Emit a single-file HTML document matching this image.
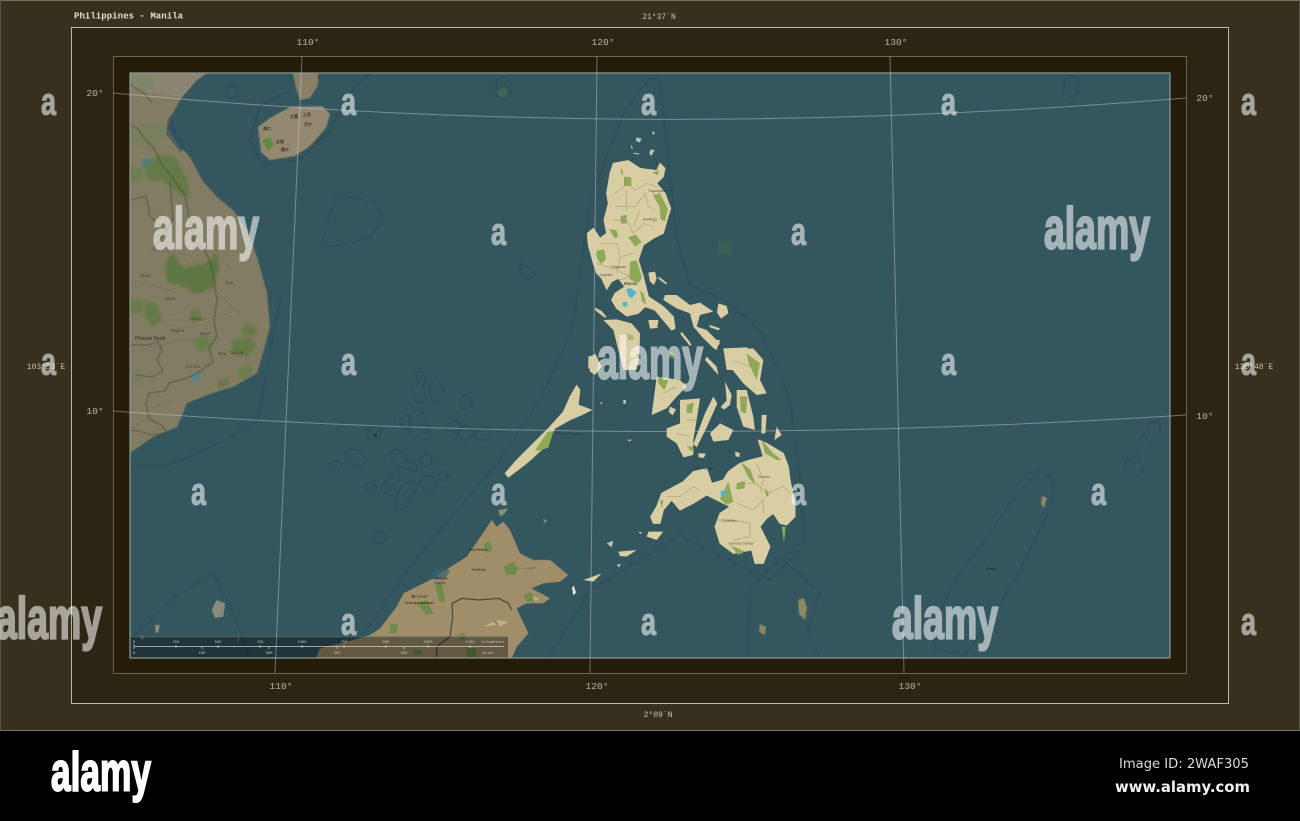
<!DOCTYPE html>
<html><head><meta charset="utf-8"><title>Philippines - Manila</title>
<style>html,body{margin:0;padding:0;background:#000}svg{display:block}</style></head>
<body>
<svg xmlns="http://www.w3.org/2000/svg" width="1300" height="821" viewBox="0 0 1300 821">
<defs>
<clipPath id="m"><rect x="130" y="73" width="1040" height="585"/></clipPath>
<filter id="b" x="-5%" y="-5%" width="110%" height="110%"><feGaussianBlur stdDeviation="0.55"/></filter>
<filter id="b2" x="-5%" y="-5%" width="110%" height="110%"><feGaussianBlur stdDeviation="1.3"/></filter>
</defs>
<rect width="1300" height="821" fill="#000"/>
<rect x="0" y="0" width="1300" height="731" fill="#38301e"/>
<path d="M0 .5H1300M0 730.5H1300" stroke="#7b715a" stroke-width="1"/>
<path d="M.5 0V730M1299.5 0V730" stroke="#5a5340" stroke-width="1"/>
<rect x="71.5" y="27.5" width="1157" height="676" fill="#2d2513" stroke="#bdb8a0"/>
<rect x="113.5" y="56.5" width="1073" height="617" fill="#241b09" stroke="#6e6449"/>
<rect x="130" y="73" width="1040" height="585" fill="#34565f"/>

<g clip-path="url(#m)">
<!-- EEZ lines -->
<g fill="none" stroke="#2a4953" stroke-width=".9" filter="url(#b)" opacity=".85">
<path d="M650 78L660 80 668 155 676 235 690 285 725 300 760 330 790 400 800 480 805 545 770 580 730 560 680 535 640 560 590 590 560 640 548 658"/>
<path d="M650 78L625 110 590 200 582 260 572 330 540 400 500 460 440 530 400 580 360 640"/>
<path d="M130 465L170 465 225 440 258 420 265 380 280 300"/>
<path d="M370 73L345 98 330 130 300 160 262 165 250 140 260 105 292 90"/>
<path d="M130 640L175 597 213 574 228 600 250 658"/>
<path d="M780 558L820 592 808 630 820 658M780 558L750 590 748 658"/>
<path d="M1040 471L1054 480 1050 510 1020 570 990 620 965 655 935 650 932 630 955 580 985 540 1020 490z"/>
<path d="M1125 460L1138 455 1143 470 1135 478 1124 472z"/>
<path d="M1150 422L1160 422 1160 435 1150 441 1143 435z"/>
<path d="M497 88a7 7 0 1 0 12 0a7 7 0 1 0-12 0zM1065 86a7 7 0 1 0 12 1a7 7 0 1 0-12-1zM226 92a6 6 0 1 0 12 0a6 6 0 1 0-12 0z"/>
<path d="M337 194L375 203 383 218 370 238 330 247 322 240z"/>
<path d="M521 263l8 5 6 7-6 5-9-7z"/>
<!-- Spratly loops -->
<path d="M416 374a5 6 0 1 1 9 8l-3 6a6 8 0 1 1-8 6 7 6 0 0 1 5-10z"/>
<path d="M430 388a6 7 0 0 1 12-2c4 4 0 12-4 16-5 4-9-8-8-14z"/>
<path d="M410 415a8 7 0 0 1 15 0c2 10 4 14 0 18-6 5-14 3-16-2z"/>
<path d="M400 420a6 6 0 1 1 10 6 6 6 0 0 1-10-6z"/>
<path d="M460 402a6 7 0 1 1 12 0 6 7 0 1 1-12 0z"/>
<path d="M448 427a7 6 0 1 1 13 3 7 6 0 0 1-13-3zM458 433a7 7 0 1 1 14 0 7 7 0 0 1-14 0zM474 433a9 6 0 1 1 18 0 9 7 0 0 1-18 0z"/>
<path d="M367 433a7 7 0 1 1 14 0 7 7 0 0 1-14 0z"/>
<path d="M345 457a8 6 0 0 1 18-2c4 3 4 9-2 10-7 2-8 2-16-8zM330 464a6 5 0 1 1 10 5 6 5 0 0 1-10-5z"/>
<path d="M390 455a6 6 0 0 1 12 0l14 10c2 6-2 8-6 6l-17-8zM420 460a6 6 0 1 1 12 0 6 6 0 0 1-12 0z"/>
<path d="M380 490c4-8 10-14 14-18 8-2 6 6 2 10l-8 12zM366 487a5 5 0 1 1 10 0 5 5 0 0 1-10 0z"/>
<path d="M400 490c4-8 10-10 14-8 6 4 2 12-4 14-3 12-10 18-14 12-2-6 0-12 4-18zM420 483a8 7 0 1 1 16 0 8 7 0 0 1-16 0zM438 476a5 4 0 1 1 10 0 5 4 0 0 1-10 0z"/>
<path d="M373 537a6 6 0 1 1 13 0 6 6 0 0 1-13 0z"/>
</g>
<path d="M718 240h14v14h-14z" fill="#3b5f54" filter="url(#b)"/>

<!-- Indochina -->
<path d="M130 73H207L197 80 182 97 173 113 168 128 177 143 190 157 202 180 217 197 233 210 248 230 258 260 267 293 270 327 263 353 257 373 233 387 213 393 187 403 183 413 177 427 153 437 130 453z" fill="#827b63" filter="url(#b)"/>
<path d="M130 73H207L197 80 182 97 130 90z" fill="#8a8570"/>
<path d="M172 113l2 15 12 20-6 4-14-18 2-15z" fill="#2f4f5a" opacity=".6"/>
<g filter="url(#b2)" opacity=".78">
<path d="M130 76l20-2 6 10-14 8-12-2z" fill="#7f8568"/>
<path d="M131 125l30 0 6 10-18 14-18-6z" fill="#72815c" opacity=".75"/>
<path d="M143 165l15-10 18 2 10 20 5 22-10-4-18-14-14-1z" fill="#5e7a3f"/>
<path d="M130 165l12 2 3 12-15 4z" fill="#6c7e52"/>
<path d="M165 262l8-8 10 14 24-5 10-10 2 15-6 20-18 6-12-8-16-4z" fill="#557437"/>
<path d="M145 300l12 4 5 18-10 5-8-13z" fill="#5d7a3e"/>
<path d="M130 300h12v14h-12z" fill="#647a4a"/>
<path d="M190 310l8 0 3 8-8 6zM258 328l-4 8-14-2 6-10z" fill="#5f7a3c"/>
<path d="M232 340l18-3 6 8-8 12-16-3z" fill="#5e7a3e"/>
<path d="M193 340l12-4 8 10-14 6z" fill="#5f7f3f"/>
<path d="M238 368l12-4 3 8-12 8z" fill="#667f42"/>
<path d="M218 380l12-3-3 9-9 3z" fill="#63793f"/>
<path d="M130 370h14v16h-14z" fill="#7a7d5e"/>
</g>
<rect x="191" y="373" width="9" height="8" fill="#4a8a9c" opacity=".7"/>
<rect x="142" y="158" width="10" height="8" fill="#41808c" opacity=".6"/>
<g fill="none" stroke="#3f4236" stroke-width=".8" opacity=".8" filter="url(#b)">
<path d="M130 125l8 4 5 8 10 10 8 16 14 18 10 15 5 25 4 20 10 8 5 10 5 20 3 22-3 20 3 15-8 12 4 14-14 10-12 6-18 5-4 8-16 2-3 10 3 16 12 6 6 8-16 2-12-4-18 0"/>
<path d="M130 345l20 0 8-4 4 10-5 8 6 12-10 6-18-2"/>
<path d="M130 85l14 8 8 10M130 200l16-4 4 20 12 12M170 180l3 40 -20 30"/>
</g>
<g fill="none" stroke="#6e6a55" stroke-width=".6" opacity=".8">
<path d="M140 200l30 20 40 20 20 30M150 250l40 5 30 40 20 20M130 280l40 10 40-10M170 320l30 0 40-10M140 350l40-10 40 0M150 410l20-10M130 430l30-20M190 230l30 30"/>
</g>
<g font-family="Liberation Sans,sans-serif" font-size="4.5" fill="#2c2c24" opacity=".7">
<text x="135" y="340" font-weight="bold" font-size="5">Phnom Penh</text><text x="170" y="332">Angkor</text><text x="190" y="320">Stung</text><text x="200" y="335">Buon</text><text x="218" y="355">Nha</text><text x="186" y="368">Ho Chi</text><text x="225" y="284">Quy</text><text x="165" y="300">Ubon</text><text x="140" y="277">Khon</text><text x="230" y="354">Da Lat</text>
</g>

<!-- Hainan + Leizhou -->
<path d="M293 73H318L318 85 310 98 300 100 296 88z" fill="#8a8068" filter="url(#b)"/>
<path d="M258 127L270 118 290 107 322 106 330 114 326 128 310 146 295 156 270 160 261 152z" fill="#958870" filter="url(#b)"/>
<path d="M262 140l8-3 4 8-6 6z" fill="#5f8a3f" filter="url(#b)"/>
<g font-family="Liberation Sans,sans-serif" font-size="4" font-weight="bold" fill="#222" opacity=".8">
<text x="263" y="130">海口</text><text x="290" y="118">文昌</text><text x="303" y="116">三亚</text><text x="276" y="143">五指</text><text x="304" y="126">万宁</text><text x="281" y="151">陵水</text>
</g>

<!-- Philippines north: coordinates from crop -->
<g transform="translate(500 130) scale(.33333)" filter="url(#b)">
<path fill="#d9cda4" stroke="#d9cda4" stroke-width="3" stroke-linejoin="round" d="M340 100L385 92 420 115 470 122 480 100 495 115 490 140 470 160 495 190 512 235 500 275 490 310 460 325 430 345 415 390 430 440 445 500 490 530 520 560 525 595 515 600 490 570 465 540 435 530 415 550 380 558 350 535 335 510 345 490 375 470 355 445 335 455 320 478 305 445 290 430 280 400 265 345 262 310 280 295 300 325 320 310 312 270 325 220 320 190 330 130z"/>
<path fill="#d9cda4" d="M310 570L350 568 395 580 420 610 418 680 410 720 370 720 350 640 340 600z"/>
<path fill="#d9cda4" d="M445 428L465 425 470 445 462 465 450 455zM475 440l12 8 15 12-4 3-22-16zM445 570l30 0-3 24-22 2zM655 520l25 8 5 22-22 16-12-18zM285 533l20 10 15 18-6 2-28-22z"/>
<path fill="#d9cda4" d="M495 495L530 495 570 525 600 518 640 545 600 555 590 590 620 600 660 640 645 658 610 625 580 590 570 550 530 535 490 510z"/>
<path fill="#d9cda4" d="M670 655L740 652 770 680 785 720H680zM265 680l20-5 10 40h-30zM545 605l20 25 10 15-6 2-28-35zM630 585l30 10-4 6-28-10z"/>
<path fill="#e8e6d8" opacity=".75" d="M410 22l15 4-6 12-12-6zM393 42l6 14-5 0zM400 68l18 2-2 4-16-3zM452 58l12 2-10 18-6-8zM458 4l6 2-2 8-5-2z"/>
<g fill="#8fa859">
<path d="M372 140l22 2 0 26-22 0zM362 108l8 24-6 2zM458 195l22-5 14 28 10 20-10 36-12-6-4-40z"/>
<path d="M362 258l18-4 0 26-18 0zM328 298l22 2 4 20-10 6zM385 322l22-8 18 22-20 14zM290 362l22-4 6 30-16 14-12-20z"/>
<path d="M390 395l20-4 16 52-10 16-28-12zM420 480l12 14 6 30-12-10zM458 128l20-8-6 16zM275 685l16 0 10 30h-20z"/>
<path d="M380 610l22 8 0 60-10 0z" opacity=".6"/>
</g>
<path d="M378 478l14-4 18 14-14 16-10-4-4-12z" fill="#4fb5cd"/>
<path d="M368 515h14v14h-14z" fill="#5ab5ba"/>
<g fill="none" stroke="#a8986c" stroke-width="2" opacity=".85">
<path d="M345 190l40-30 20 20 35-20 30 10M345 230l60 0 30-40 10 40 20 10M340 270l40 0 20 40 30-30 30 10M300 340l50 0 10 40 40-10M290 400l60 20 40 20 -30 10M420 240l-20 50M380 180l0 60M360 380l-10 50"/>
</g>
<g font-family="Liberation Sans,sans-serif" font-size="11" fill="#2a2a20" opacity=".75">
<text x="444" y="186">Tuguegarao</text><text x="428" y="271">Santiago</text><text x="334" y="414">Dagupan</text><text x="298" y="438">Angeles</text>
<text x="372" y="465" font-size="13" font-weight="bold">Manila</text>
</g>
</g>

<!-- Philippines south: coordinates from crop -->
<g transform="translate(480 340) scale(.33333)" filter="url(#b)">
<path fill="#d9cda4" stroke="#d9cda4" stroke-width="2" stroke-linejoin="round" d="M290 135L300 150 295 195 335 210 305 225 270 240 225 265 190 325 140 370 85 412 75 400 110 360 150 320 205 265 250 215 270 170z"/>
<path fill="#d9cda4" d="M325 60l20-20 20 40 -20 25-15-10zM420 0l60 0 -10 50-30 -10zM515 225L530 110 600 120 620 140 590 170 560 205zM570 200l18 8-10 18-12-10z"/>
<path fill="#d9cda4" d="M600 180L660 175 650 240 640 300 640 345 610 352 590 310 560 290 560 265 600 250z"/>
<path fill="#d9cda4" d="M700 170L712 190 680 262 650 322 640 312 675 220zM690 280L720 250 760 270 745 300 700 305zM655 340h22l-5 14-16-2zM765 335l14 4 0 12-12-2z"/>
<path fill="#d9cda4" d="M730 30L820 25 850 60 840 120 860 160 830 165 790 130 750 80zM735 125l20 40 -5 30-18 14-10-8 18-20zM770 150L800 150 820 230 825 270 790 260 770 200zM845 225l15 0-4 55-12 0zM890 260l15 25-22 15z"/>
<path fill="#d9cda4" d="M690 0h30l-10 30-15 -10zM680 50l30 30 5 25-40-45z"/>
<path fill="#d9cda4" stroke="#d9cda4" stroke-width="3" stroke-linejoin="round" d="M780 370L810 360 850 350 835 300 860 310 910 340 925 380 930 420 945 490 945 530 920 555 900 550 880 520 860 535 840 560 870 620 850 670 825 670 815 630 760 640 720 610 705 560 720 520 750 500 700 475 680 465 640 490 600 510 575 480 550 510 540 550 520 550 512 530 530 500 545 460 610 425 640 395 680 385 695 430 730 420 745 395z"/>
<path fill="#d9cda4" d="M505 575L550 575 530 600 500 590zM415 635L470 630 440 650 420 648zM310 720L365 700 340 725z"/>
<path fill="#e8e6d8" opacity=".75" d="M380 610l20-8 -5 20zM410 675l12-4-4 12zM275 745l6-8 8 20-6 6zM475 575l12 2-6 5zM360 190l5-5 2 8z M430 180l8 0 0 10-8 2zM440 300l14-2-2 6z"/>
<g fill="#8fa859">
<path d="M165 330l18-25 20-30 18-2-16 50-30 10zM620 195l22-8-6 32-16 0zM770 430l25-8-2 24-24 2zM745 425l15 60-20 10-20-18zM782 365l30 25 15 45-20-20zM845 300l35 40 25 20-15 0-35-20zM780 170l22 0-4 50-16-6zM800 40l40 30-10 50-24-50zM535 110l30 10-12 30-18-20zM905 560l12 0-5 48zM750 615l45 20-20 10zM620 320l20 0-4 15zM855 440l12 24-8 8zM540 480l10 2-4 24zM570 35l14 8-8 16z"/>
</g>
<path d="M722 454l18-5-5 20-12 0z" fill="#4fb5cd"/>
<g fill="none" stroke="#a8986c" stroke-width="2" opacity=".85">
<path d="M790 430l40 0 30 30 50-20 20 20M770 490l50 20 30-30 0 40M710 540l50 0 50 10 0 40-50 10M830 370l20 50 -10 40M560 470l40 0 40-30 20 10M620 240l30 0M590 280l40 10M760 60l50 20M550 160l40-20"/>
</g>
<g font-family="Liberation Sans,sans-serif" font-size="11" fill="#37372a" opacity=".75">
<text x="230" y="285" fill="#2a2a20">Puerto Princesa</text><text x="835" y="414">Butuan</text><text x="725" y="546">Cotabato</text><text x="745" y="614">General Santos</text><text x="650" y="388" fill="#222">Dumaguete</text>
</g>
</g>

<!-- Borneo: coordinates from crop -->
<g transform="translate(120 500) scale(.33333)" filter="url(#b)">
<path fill="#a08e6b" d="M590 470L600 445 680 425 750 405 780 385 830 320 850 280 940 235 985 205 1040 170 1075 120 1115 60 1130 80 1150 65 1170 90 1200 160 1240 180 1290 180 1345 225 1320 245 1270 250 1235 265 1290 295 1270 310 1220 310 1190 325 1225 400 1190 440 1175 475H590z"/>
<path fill="#6f8a49" d="M1150 200l30-15 15 20-10 20-25 0zM1210 285l25-8 8 25-20 5zM1190 205l60-5-10 8zM945 250l20 0 12 55-20 0zM890 310l30-10 20 40-20 5zM810 370l25 5-5 25-20 0zM1090 130l20-5 8 25-20 10zM1020 400l15 0 0 20-15 0zM1040 445h28v25h-28zM880 450h25v15h-25z"/>
<path fill="#d0c18c" d="M1130 360l35 5 -25 15zM1235 290l25 5-15 8zM1120 365l10 10-40 5z" opacity=".7"/>
<path fill="none" stroke="#39382c" stroke-width="3" d="M950 470l0-30 40-30 8-60 -2-40 30-15 50 5 60 -5 30 15 8 20"/>
<path fill="#b7a987" d="M290 300l25 10-5 40-25 4-10-24zM60 405l15 10-10 5zM105 375l14 0-4 22-8 2zM352 420l8-14-5 20z" opacity=".65"/>
<path fill="#9da06a" d="M1135 30l30-5-15 20-10 4zM1270 55l12 8-10 6z" opacity=".8"/>
<path fill="#3a6470" d="M940 210l25-5 25 5-10 20-40 10z" opacity=".7"/>
<g font-family="Liberation Sans,sans-serif" font-size="12" font-weight="bold" fill="#2a2a20">
<text x="875" y="292" letter-spacing="2">Brunei</text><text x="855" y="312" letter-spacing="2">Darussalam</text>
<text x="1048" y="152" font-size="8">Kota Kinabalu</text><text x="1055" y="212" font-size="8">Kota Belud</text><text x="945" y="238" font-size="10" fill="#1f2d50">Wilayah</text><text x="945" y="250" font-size="9" fill="#1f2d50">Labuan</text>
</g>
<path fill="#f2f1e6" d="M1358 260l4 0 3 22-6 3z"/>
</g>

<!-- small islands east -->
<path d="M798 600l6-2 3 10-2 12-6-6zM760 624l6 3-1 8-6-3z" fill="#8c8968" filter="url(#b)"/>
<path d="M1042 496l5 2-3 10-3-4z" fill="#8c8968" filter="url(#b)"/>
<path d="M497 90l9-2 3 6-6 4-5-2z" fill="#3c6655"/>
<text x="986" y="570" font-family="Liberation Sans,sans-serif" font-size="4" fill="#222">Belau</text>
<circle cx="375" cy="435" r="2" fill="#2a3a3a"/>

<!-- scale bar -->
<rect x="130" y="637" width="378" height="21" fill="#000" opacity=".38"/>
<rect x="130" y="636.5" width="378" height=".7" fill="#5d6d68"/>
<g stroke="#cfd2c8" stroke-width=".7">
<path d="M134 646.5H504"/>
<path d="M134 644v5M176 645v3M218 645v3M260 645v3M302 645v3M344 645v3M386 645v3M428 645v3M470 645v3M202 646v3M269 646v3M337 646v3M404 646v3" fill="none"/>
</g>
<g font-family="Liberation Mono,monospace" font-size="3.8" fill="#c4c6ba" text-anchor="middle">
<text x="134" y="643">0</text><text x="176" y="643">250</text><text x="218" y="643">500</text><text x="260" y="643">750</text><text x="302" y="643">1000</text><text x="344" y="643">750</text><text x="386" y="643">900</text><text x="428" y="643">1050</text><text x="470" y="643">1200</text><text x="493" y="643">kilometers</text>
<text x="134" y="654">0</text><text x="202" y="654">100</text><text x="269" y="654">300</text><text x="337" y="654">450</text><text x="404" y="654">600</text><text x="488" y="654">miles</text>
</g>
</g>
<rect x="130" y="73" width="1040" height="585" fill="none" stroke="#8e9c98" stroke-width="1.2"/>

<!-- grid -->
<g fill="none" stroke="#c9d6d6" stroke-opacity=".45" stroke-width="1">
<path d="M302 56L275 673"/>
<path d="M597 56L590 673"/>
<path d="M890 56L904 673"/>
<path d="M113 93Q640 143 1186 98"/>
<path d="M113 411Q640 450 1186 415"/>
</g>

<!-- labels -->
<g font-family="Liberation Mono,monospace" font-size="9.6" fill="#b9b49c" text-anchor="middle">
<text x="308" y="45">110°</text><text x="603" y="45">120°</text><text x="896" y="45">130°</text>
<text x="281" y="689">110°</text><text x="597" y="689">120°</text><text x="910" y="689">130°</text>
<text x="95" y="96">20°</text><text x="95" y="414">10°</text>
<text x="1205" y="101">20°</text><text x="1205" y="419">10°</text>
</g>
<g font-family="Liberation Mono,monospace" font-size="8" fill="#c6c1a9" text-anchor="middle">
<text x="659" y="19">21°37´N</text><text x="658" y="717">2°09´N</text>
<text x="46" y="369">103°53´E</text><text x="1254" y="369">130°48´E</text>
</g>
<text x="74" y="18.5" font-family="Liberation Mono,monospace" font-size="9" font-weight="bold" fill="#e4e0cd" textLength="109">Philippines - Manila</text>

<!-- watermarks -->
<g font-family="Liberation Sans,sans-serif" font-weight="bold" fill="#fff" stroke="#fff" opacity=".56">
<g font-size="38" stroke-width="1.1">
<text x="41" y="114.5" textLength="15" lengthAdjust="spacingAndGlyphs">a</text>
<text x="341" y="114.5" textLength="15" lengthAdjust="spacingAndGlyphs">a</text>
<text x="641" y="114.5" textLength="15" lengthAdjust="spacingAndGlyphs">a</text>
<text x="941" y="114.5" textLength="15" lengthAdjust="spacingAndGlyphs">a</text>
<text x="1241" y="114.5" textLength="15" lengthAdjust="spacingAndGlyphs">a</text>
<text x="491" y="244.5" textLength="15" lengthAdjust="spacingAndGlyphs">a</text>
<text x="791" y="244.5" textLength="15" lengthAdjust="spacingAndGlyphs">a</text>
<text x="41" y="374.5" textLength="15" lengthAdjust="spacingAndGlyphs">a</text>
<text x="341" y="374.5" textLength="15" lengthAdjust="spacingAndGlyphs">a</text>
<text x="941" y="374.5" textLength="15" lengthAdjust="spacingAndGlyphs">a</text>
<text x="1241" y="374.5" textLength="15" lengthAdjust="spacingAndGlyphs">a</text>
<text x="191" y="504.5" textLength="15" lengthAdjust="spacingAndGlyphs">a</text>
<text x="491" y="504.5" textLength="15" lengthAdjust="spacingAndGlyphs">a</text>
<text x="791" y="504.5" textLength="15" lengthAdjust="spacingAndGlyphs">a</text>
<text x="1091" y="504.5" textLength="15" lengthAdjust="spacingAndGlyphs">a</text>
<text x="341" y="634.5" textLength="15" lengthAdjust="spacingAndGlyphs">a</text>
<text x="641" y="634.5" textLength="15" lengthAdjust="spacingAndGlyphs">a</text>
<text x="1241" y="634.5" textLength="15" lengthAdjust="spacingAndGlyphs">a</text>
</g>
<g font-size="58" stroke-width="2.2">
<text x="153" y="248.5" textLength="106" lengthAdjust="spacingAndGlyphs">alamy</text>
<text x="1044" y="248.5" textLength="106" lengthAdjust="spacingAndGlyphs">alamy</text>
<text x="597" y="378.5" textLength="106" lengthAdjust="spacingAndGlyphs">alamy</text>
<text x="-4" y="638.5" textLength="106" lengthAdjust="spacingAndGlyphs">alamy</text>
<text x="892" y="638.5" textLength="106" lengthAdjust="spacingAndGlyphs">alamy</text>
</g>
</g>

<!-- footer -->
<text x="51" y="790.5" font-family="Liberation Sans,sans-serif" font-weight="bold" font-size="55" fill="#fff" stroke="#fff" stroke-width="2" textLength="100" lengthAdjust="spacingAndGlyphs">alamy</text>
<text x="1119" y="768" font-family="DejaVu Sans,sans-serif" font-size="13.5" fill="#dcdcdc" textLength="130" lengthAdjust="spacingAndGlyphs">Image ID: 2WAF305</text>
<text x="1115" y="792" font-family="DejaVu Sans,sans-serif" font-weight="bold" font-size="15" fill="#f0f0f0" textLength="135" lengthAdjust="spacingAndGlyphs">www.alamy.com</text>
</svg>
</body></html>
